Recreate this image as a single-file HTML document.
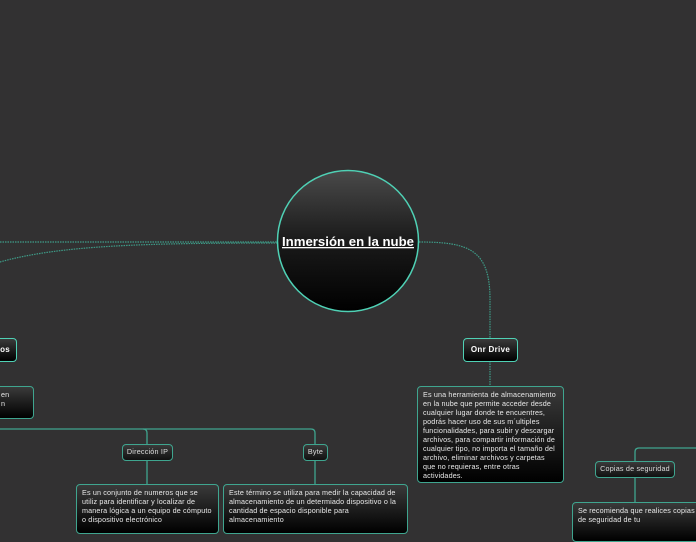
<!DOCTYPE html>
<html><head><meta charset="utf-8"><style>
body{margin:0;width:696px;height:520px;overflow:hidden;background:#323132;font-family:"Liberation Sans",sans-serif;position:relative}
.b{position:absolute;box-sizing:border-box;border:1px solid #3fa58f;border-radius:4px;background:linear-gradient(#3a3a3a,#000);color:#e8e8e8;font-size:7.2px;letter-spacing:0.15px;line-height:9px;padding:3px 4px 3px 5px;overflow:hidden}
.n{position:absolute;box-sizing:border-box;border:1px solid #3fa58f;border-radius:4px;background:linear-gradient(#3a3a3a,#111);color:#ddd;font-size:7.2px;letter-spacing:0.2px;text-align:center;line-height:14px}
.m{position:absolute;box-sizing:border-box;border:1.5px solid #4fd1b5;border-radius:4px;background:linear-gradient(#3a3a3a,#000);color:#fff;font-weight:bold;font-size:8px;letter-spacing:0.3px;text-align:center;line-height:20px}
</style></head><body>
<svg width="696" height="520" style="position:absolute;left:0;top:0">
<g fill="none" stroke="#3e9c88" stroke-width="1.2" stroke-dasharray="1.5,1">
<path d="M0 242 H278"/><path d="M0 262 C60 245 150 243 278 243"/>
<path d="M419 242 C470 242 490 250 490 300 V338"/><path d="M490 361 V386"/>
</g>
<g fill="none" stroke="#3fa58f" stroke-width="1.3">
<path d="M0 429 H311 Q315 429 315 433 V444"/><path d="M143 429 Q147 429 147 433 V444"/>
<path d="M147 460 V484"/><path d="M315 460 V484"/>
<path d="M635 461 V452 Q635 448 639 448 H696"/><path d="M635 477 V502"/>
</g>
<defs><linearGradient id="g" x1="0" y1="0" x2="0" y2="1"><stop offset="0" stop-color="#4a4a4a"/><stop offset="0.5" stop-color="#1a1a1a"/><stop offset="1" stop-color="#000"/></linearGradient></defs>
<circle cx="348" cy="241" r="70.5" fill="url(#g)" stroke="#4fd1b5" stroke-width="1.5"/>
<text x="348" y="246" text-anchor="middle" fill="#fff" font-family="Liberation Sans" font-weight="bold" font-size="13" textLength="132" lengthAdjust="spacingAndGlyphs" text-decoration="underline">Inmersión en la nube</text>
</svg>
<div class="m" style="left:-20px;top:338px;width:37px;height:24px;line-height:22px;text-align:right;padding-right:6px">os</div>
<div class="b" style="left:-10px;top:386px;width:44px;height:33px;padding-left:10px">en<br>n</div>
<div class="m" style="left:463px;top:338px;width:55px;height:24px;line-height:22px">Onr Drive</div>
<div class="b" style="left:417px;top:386px;width:147px;height:97px">Es una herramienta de almacenamiento en la nube que permite acceder desde cualquier lugar donde te encuentres, podrás hacer uso de sus m´ultiples funcionalidades, para subir y descargar archivos, para compartir información de cualquier tipo, no importa el tamaño del archivo, eliminar archivos y carpetas que no requieras, entre otras actividades.</div>
<div class="n" style="left:122px;top:444px;width:51px;height:17px">Dirección IP</div>
<div class="n" style="left:303px;top:444px;width:25px;height:17px">Byte</div>
<div class="b" style="left:76px;top:484px;width:143px;height:50px">Es un conjunto de numeros que se utiliz para identificar y localizar de manera lógica a un equipo de cómputo o dispositivo electrónico</div>
<div class="b" style="left:223px;top:484px;width:185px;height:50px">Este término se utiliza para medir la capacidad de almacenamiento de un determiado dispositivo o la cantidad de espacio disponible para almacenamiento</div>
<div class="n" style="left:595px;top:461px;width:80px;height:17px">Copias de seguridad</div>
<div class="b" style="left:572px;top:502px;width:130px;height:40px">Se recomienda que realices copias de seguridad de tu</div>
</body></html>
